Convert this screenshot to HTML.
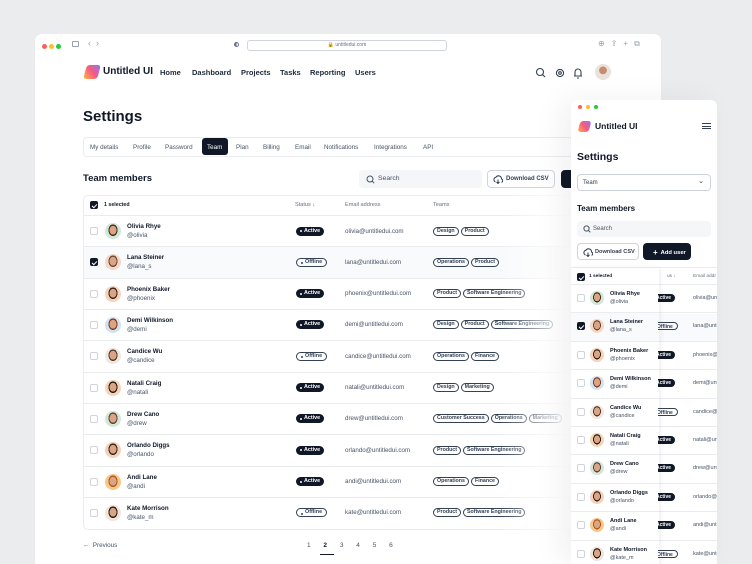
<!DOCTYPE html>
<html><head><meta charset="utf-8"><style>
*{box-sizing:border-box;margin:0;padding:0}
body{width:752px;height:564px;overflow:hidden;background:#ebecee;font-family:"Liberation Sans",sans-serif;color:#101828;position:relative}
.a{position:absolute}
.win{position:absolute;left:35px;top:34px;width:626px;height:530px;background:#fff;border-radius:7px 7px 0 0;overflow:hidden}
.dot{position:absolute;width:5px;height:5px;border-radius:50%}
.nav{position:absolute;top:68px;font-size:7.5px;font-weight:bold;color:#1d2939}
.tab{position:absolute;top:143.5px;font-size:6.3px;color:#475467}
.cb{position:absolute;width:8px;height:8px;border:1px solid #d0d5dd;border-radius:2px;background:#fff}
.cbk{background:#101828;border-color:#101828}
.cbk:after{content:"";position:absolute;left:2px;top:0.5px;width:2px;height:4px;border:solid #fff;border-width:0 1.2px 1.2px 0;transform:rotate(45deg)}
.av{position:absolute;border-radius:50%;overflow:hidden}
.nm{position:absolute;font-size:6.2px;font-weight:bold;color:#101828;white-space:nowrap}
.hd{position:absolute;font-size:6.2px;color:#667085;white-space:nowrap}
.pill{position:absolute;height:9px;border-radius:5px;font-size:5.4px;font-weight:bold;line-height:9px;padding:0 4px 0 8px;white-space:nowrap}
.pill:before{content:"";position:absolute;left:3.5px;top:3.5px;width:2px;height:2px;border-radius:50%;background:currentColor}
.act{background:#101828;color:#fff}
.off{border:0.8px solid #344054;color:#344054;line-height:7.5px}
.em{position:absolute;font-size:6.2px;color:#475467;white-space:nowrap}
.tags{position:absolute;display:flex;gap:2px;height:9px}
.tg{display:block;height:9px;border:0.8px solid #344054;border-radius:5px;font-size:5.3px;line-height:7.6px;padding:0 3px;color:#344054;font-weight:bold;white-space:nowrap}
.line{position:absolute;height:1px;background:#eaecf0}
</style></head><body>
<div class="win">
 <div class="dot" style="left:7px;top:10px;background:#ff5f57"></div>
 <div class="dot" style="left:14px;top:10px;background:#febc2e"></div>
 <div class="dot" style="left:21px;top:10px;background:#28c840"></div>
 <div class="a" style="left:37px;top:7px;width:7px;height:6px;border:1px solid #98a2b3;border-radius:1px"></div>
 <div class="a" style="left:53px;top:4px;font-size:9px;color:#98a2b3">‹ &nbsp;›</div>
 <div class="a" style="left:199px;top:8px;width:5px;height:5px;border:1px solid #667085;border-radius:50%;background:linear-gradient(90deg,#667085 50%,#fff 50%)"></div>
 <div class="a" style="left:212px;top:6px;width:200px;height:11px;border:1px solid #d0d5dd;border-radius:3px;font-size:5px;color:#667085;text-align:center;line-height:9px">🔒 untitledui.com</div>
 <div class="a" style="left:563px;top:5px;font-size:8px;color:#98a2b3;letter-spacing:6px">⊕⇪+⧉</div>
 <div class="a" style="left:50px;top:31px;width:14px;height:14px;background:linear-gradient(45deg,#fdb022,#f63d68,#7a5af8);border-radius:3px;transform:skewX(-15deg);opacity:.85"></div>
 <div class="a" style="left:68px;top:32px;font-size:10px;font-weight:bold">Untitled UI</div>
</div>
<div class="nav" style="left:160px">Home</div>
<div class="nav" style="left:192px">Dashboard</div>
<div class="nav" style="left:241px">Projects</div>
<div class="nav" style="left:280px">Tasks</div>
<div class="nav" style="left:310px">Reporting</div>
<div class="nav" style="left:355px">Users</div>
<svg class="a" style="left:535px;top:67px" width="80" height="14" fill="none" stroke="#344054" stroke-width="1.1"><circle cx="5" cy="5" r="3.5"/><path d="M7.5 7.5l2.5 2.5"/><circle cx="25" cy="6" r="3.6"/><circle cx="25" cy="6" r="1.3"/><path d="M39 9h8M40 9V5a3 3 0 016 0v4M42 11h2"/></svg>
<div class="av" style="left:595px;top:64px;width:16px;height:16px;background:radial-gradient(circle at 50% 40%,#c98d6d 30%,#e8e1dc 32%)"></div>
<div class="a" style="left:83px;top:108px;font-size:15px;font-weight:bold">Settings</div>
<div class="a" style="left:83px;top:137px;width:490px;height:20px;border:1px solid #eaecf0;border-radius:4px"></div>
<div class="tab" style="left:90px">My details</div>
<div class="tab" style="left:133px">Profile</div>
<div class="tab" style="left:165px">Password</div>
<div class="a" style="left:202px;top:138px;width:26px;height:17px;background:#101828;border-radius:3px"></div>
<div class="tab" style="left:207px;color:#fff">Team</div>
<div class="tab" style="left:236px">Plan</div>
<div class="tab" style="left:263px">Billing</div>
<div class="tab" style="left:295px">Email</div>
<div class="tab" style="left:324px">Notifications</div>
<div class="tab" style="left:374px">Integrations</div>
<div class="tab" style="left:423px">API</div>
<div class="a" style="left:83px;top:173px;font-size:9.5px;font-weight:bold">Team members</div>
<div class="a" style="left:359px;top:170px;width:123px;height:18px;background:#f5f6f7;border-radius:4px;font-size:6.8px;color:#475467;padding:5px 0 0 19px">Search</div>
<svg class="a" style="left:366px;top:175px" width="9" height="9" fill="none" stroke="#475467" stroke-width="1"><circle cx="4" cy="4" r="3"/><path d="M6.2 6.2l2 2"/></svg>
<div class="a" style="left:487px;top:170px;width:68px;height:18px;border:1px solid #d0d5dd;border-radius:4px;font-size:6px;font-weight:bold;color:#344054;padding:5px 0 0 18px">Download CSV</div>
<svg class="a" style="left:493px;top:175px" width="10" height="9" fill="none" stroke="#344054" stroke-width="1"><path d="M2.5 7A2.5 2.5 0 013 2.2 3 3 0 018.5 4a1.7 1.7 0 010 3.3M5 4.5v4M3.5 7l1.5 1.5L6.5 7"/></svg>
<div class="a" style="left:561px;top:170px;width:20px;height:18px;background:#101828;border-radius:4px"></div>
<div class="a" style="left:83px;top:195px;width:500px;height:335px;border:1px solid #eaecf0;border-radius:5px"></div>
<div class="a" style="left:84px;top:247px;width:500px;height:31px;background:#f9fafb"></div>
<div id="main"></div>
<div class="a" style="left:83px;top:542px;font-size:6.3px;color:#475467">← &nbsp;Previous</div>
<div class="a" style="left:307px;top:542px;font-size:6.5px;color:#475467;word-spacing:11px">1 <b style="color:#101828">2</b> 3 4 5 6</div>
<div class="a" style="left:320px;top:554px;width:14px;height:1px;background:#101828"></div>
<div class="a" style="left:500px;top:193px;width:80px;height:371px;background:linear-gradient(90deg,rgba(255,255,255,0),rgba(255,255,255,.95) 85%)"></div>
<div class="a" style="left:571px;top:100px;width:146px;height:464px;background:#fff;border-radius:6px 6px 0 0;box-shadow:-10px 0 30px rgba(16,24,40,.06);overflow:hidden">
 <div class="dot" style="left:7px;top:5px;background:#ff5f57;width:4px;height:4px"></div>
 <div class="dot" style="left:15px;top:5px;background:#febc2e;width:4px;height:4px"></div>
 <div class="dot" style="left:23px;top:5px;background:#28c840;width:4px;height:4px"></div>
 <div class="a" style="left:8px;top:21px;width:11px;height:11px;background:linear-gradient(45deg,#fdb022,#f63d68,#7a5af8);border-radius:3px;transform:skewX(-15deg);opacity:.85"></div>
 <div class="a" style="left:24px;top:21px;font-size:8.5px;font-weight:bold">Untitled UI</div>
 <div class="a" style="left:131px;top:23px;width:9px;height:6px;border-top:1px solid #344054;border-bottom:1px solid #344054"></div>
 <div class="a" style="left:131px;top:26px;width:9px;height:1px;background:#344054"></div>
 <div class="a" style="left:6px;top:51px;font-size:10.5px;font-weight:bold">Settings</div>
 <div class="a" style="left:6px;top:74px;width:134px;height:17px;border:1px solid #d0d5dd;border-radius:4px;font-size:6px;color:#344054;padding:4.5px 0 0 5px">Team<span style="position:absolute;right:6px;top:2px;font-size:7px">⌄</span></div>
 <div class="a" style="left:6px;top:104px;font-size:8px;font-weight:bold">Team members</div>
 <div class="a" style="left:6px;top:121px;width:134px;height:16px;background:#f5f6f7;border-radius:4px;font-size:6px;color:#475467;padding:4.5px 0 0 16px">Search</div>
 <svg class="a" style="left:12px;top:125px" width="8" height="8" fill="none" stroke="#475467" stroke-width="1"><circle cx="3.5" cy="3.5" r="2.6"/><path d="M5.5 5.5l1.8 1.8"/></svg>
 <div class="a" style="left:6px;top:143px;width:62px;height:17px;border:1px solid #d0d5dd;border-radius:4px;font-size:5.6px;font-weight:bold;color:#344054;padding:5px 0 0 17px">Download CSV</div>
 <svg class="a" style="left:12px;top:148px" width="10" height="9" fill="none" stroke="#344054" stroke-width="1"><path d="M2.5 7A2.5 2.5 0 013 2.2 3 3 0 018.5 4a1.7 1.7 0 010 3.3M5 4.5v4M3.5 7l1.5 1.5L6.5 7"/></svg>
 <div class="a" style="left:72px;top:143px;width:48px;height:17px;background:#101828;border-radius:4px;font-size:5.8px;font-weight:bold;color:#fff;padding:4px 0 0 10px"><span style="font-size:8px;position:relative;top:1px">+</span>&nbsp; Add user</div>
 <div class="line" style="left:0;top:167px;width:146px"></div>
 <div class="a" style="left:0;top:214px;width:146px;height:28px;background:#f9fafb"></div>
 <div id="mrows"></div>
</div>
<script>
var P=[["Olivia Rhye","olivia","A","olivia",["Design","Product"],"#4a2c20","#cfe8d8"],
["Lana Steiner","lana_s","O","lana",["Operations","Product"],"#6b4a3a","#f4d9c6"],
["Phoenix Baker","phoenix","A","phoenix",["Product","Software Engineering"],"#3b2418","#f5d3bd"],
["Demi Wilkinson","demi","A","demi",["Design","Product","Software Engineering"],"#8a3a20","#cfe3f5"],
["Candice Wu","candice","O","candice",["Operations","Finance"],"#5a3b2a","#eee8e2"],
["Natali Craig","natali","A","natali",["Design","Marketing"],"#2a1a12","#f3d6b8"],
["Drew Cano","drew","A","drew",["Customer Success","Operations","Marketing"],"#5b4636","#d4e6d8"],
["Orlando Diggs","orlando","A","orlando",["Product","Software Engineering"],"#3a2418","#f2d2bc"],
["Andi Lane","andi","A","andi",["Operations","Finance"],"#b5561f","#f6c88a"],
["Kate Morrison","kate_m","O","kate",["Product","Software Engineering"],"#2a1a14","#f0e4dc"]];
var h='';
h+='<div class="cb cbk" style="left:90px;top:201px"></div><div class="nm" style="left:104px;top:202px;font-size:5.3px">1 selected</div><div class="hd" style="left:295px;top:202px;font-size:5.6px">Status ↓</div><div class="hd" style="left:345px;top:202px;font-size:5.6px">Email address</div><div class="hd" style="left:433px;top:202px;font-size:5.6px">Teams</div>';
P.forEach(function(p,i){var c=231+i*31.33;
 h+='<div class="line" style="left:84px;top:'+(c-16)+'px;width:500px"></div>';
 h+='<div class="cb'+(i==1?' cbk':'')+'" style="left:90px;top:'+(c-4)+'px"></div>';
 h+='<div class="av" style="left:105px;top:'+(c-8)+'px;width:16px;height:16px;background:radial-gradient(ellipse 35% 45% at 50% 45%,#d9a585 60%,'+p[5]+' 63%,'+p[5]+' 80%,'+p[6]+' 82%)"></div>';
 h+='<div class="nm" style="left:127px;top:'+(c-8)+'px">'+p[0]+'</div><div class="em" style="left:127px;top:'+(c+1)+'px">@'+p[1]+'</div>';
 h+='<div class="pill '+(p[2]=="A"?"act":"off")+'" style="left:296px;top:'+(c-4.5)+'px">'+(p[2]=="A"?"Active":"Offline")+'</div>';
 h+='<div class="em" style="left:345px;top:'+(c-3.5)+'px">'+p[3]+'@untitledui.com</div>';
 h+='<div class="tags" style="left:433px;top:'+(c-4.5)+'px">'+p[4].map(function(t){return '<span class="tg">'+t+'</span>'}).join('')+'</div>';
});
document.getElementById('main').innerHTML=h;
var m='<div class="cb cbk" style="left:6px;top:173px"></div><div class="nm" style="left:18px;top:174px;font-size:4.8px">1 selected</div><div class="hd" style="left:96px;top:174px;font-size:4.8px">us ↓</div><div class="hd" style="left:122px;top:174px;font-size:4.8px">Email addr</div>';
P.forEach(function(p,i){var c=198+i*28.4;
 m+='<div class="line" style="left:0;top:'+(c-14)+'px;width:146px"></div>';
 m+='<div class="pill '+(p[2]=="A"?"act":"off")+'" style="left:77px;top:'+(c-4)+'px;height:8px;line-height:8px;font-size:5px">'+(p[2]=="A"?"Active":"Offline")+'</div>';
 m+='<div class="em" style="left:122px;top:'+(c-3)+'px;font-size:5.5px">'+p[3]+'@untitledui.com</div>';
});
m+='<div class="a" style="left:0;top:168px;width:88px;height:400px;box-shadow:2px 0 4px rgba(16,24,40,.06)"></div>';
P.forEach(function(p,i){var c=198+i*28.4;
 m+='<div class="a" style="left:0;top:'+(c-14)+'px;width:87px;height:28px;background:'+(i==1?'#f9fafb':'#fff')+';border-top:1px solid #eaecf0"></div>';
 m+='<div class="cb'+(i==1?' cbk':'')+'" style="left:6px;top:'+(c-4)+'px"></div>';
 m+='<div class="av" style="left:19px;top:'+(c-7)+'px;width:14px;height:14px;background:radial-gradient(ellipse 35% 45% at 50% 45%,#d9a585 60%,'+p[5]+' 63%,'+p[5]+' 80%,'+p[6]+' 82%)"></div>';
 m+='<div class="nm" style="left:39px;top:'+(c-7)+'px;font-size:5.5px">'+p[0]+'</div><div class="em" style="left:39px;top:'+(c+1)+'px;font-size:5.5px">@'+p[1]+'</div>';
});
document.getElementById('mrows').innerHTML=m;
</script>
</body></html>
